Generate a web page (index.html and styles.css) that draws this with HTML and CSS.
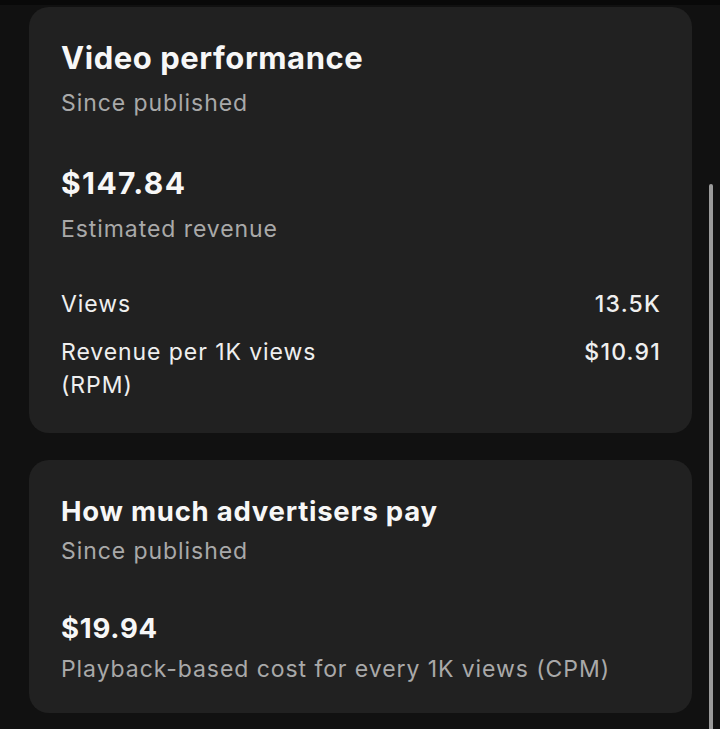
FILE: index.html
```html
<!DOCTYPE html>
<html lang="en">
<head>
<meta charset="utf-8">
<title>Video performance</title>
<link rel="stylesheet" href="styles.css">
</head>
<body>
<div class="topbar"></div>
<main class="page">
  <section class="card card-perf">
    <h2 class="title">Video performance</h2>
    <p class="sub">Since published</p>
    <p class="amount">$147.84</p>
    <p class="label">Estimated revenue</p>
    <div class="rows">
      <div class="row row-first">
        <span class="row-name">Views</span>
        <span class="row-val">13.5K</span>
      </div>
      <div class="row">
        <span class="row-name">Revenue per 1K views<br>(RPM)</span>
        <span class="row-val">$10.91</span>
      </div>
    </div>
  </section>
  <section class="card card-ads">
    <h2 class="title title-sm">How much advertisers pay</h2>
    <p class="sub sub-tight">Since published</p>
    <p class="amount amount-sm">$19.94</p>
    <p class="label label-tight">Playback-based cost for every 1K views (CPM)</p>
  </section>
</main>
<div class="scrollbar"></div>
</body>
</html>
```
FILE: styles.css
```css
html, body {
  margin: 0;
  padding: 0;
  background: #111111;
  height: 729px;
  overflow: hidden;
}
body {
  font-family: Inter, "Liberation Sans", sans-serif;
  color: #f1f1f1;
  position: relative;
}
.topbar {
  height: 5px;
  background: #090909;
}
.page {
  display: flex;
  flex-direction: column;
  gap: 27px;
  padding: 2px 28px 0 29px;
}
.card {
  background: #212121;
  border-radius: 20px;
  padding: 0 32px;
  display: flex;
  flex-direction: column;
}
.card-perf {
  height: 426px;
  box-sizing: border-box;
  padding-top: 33px;
}
.card-ads {
  height: 253px;
  box-sizing: border-box;
  padding-top: 34px;
}
.title, .sub, .amount, .label {
  margin: 0;
}
.title {
  font-size: 31px;
  line-height: 36px;
  font-weight: 700;
  color: #f7f7f7;
  letter-spacing: 0.55px;
}
.title-sm {
  font-size: 27.5px;
  line-height: 34px;
  letter-spacing: 0.75px;
}
.sub {
  font-size: 23px;
  line-height: 32px;
  color: #a9a9a9;
  margin-top: 11px;
  letter-spacing: 0.93px;
}
.sub-tight {
  margin-top: 7px;
}
.amount {
  font-size: 30px;
  line-height: 34px;
  font-weight: 700;
  color: #f7f7f7;
  margin-top: 47px;
  letter-spacing: 1.4px;
}
.amount-sm {
  font-size: 27.5px;
  margin-top: 44px;
  letter-spacing: 0.8px;
}
.label {
  font-size: 23px;
  line-height: 32px;
  color: #a9a9a9;
  margin-top: 13px;
  letter-spacing: 0.93px;
}
.label-tight {
  margin-top: 8px;
}
.rows {
  display: flex;
  flex-direction: column;
  gap: 15px;
  margin-top: 43px;
}
.row {
  display: flex;
  justify-content: space-between;
  align-items: flex-start;
  font-size: 23px;
  line-height: 33px;
  color: #efefef;
  letter-spacing: 0.93px;
}
.row-val {
  font-weight: 500;
  letter-spacing: 1.2px;
  margin-right: -1px;
}
.scrollbar {
  position: absolute;
  left: 709px;
  top: 184px;
  width: 4px;
  height: 560px;
  border-radius: 2px;
  background: #9b9b9b;
}
```
